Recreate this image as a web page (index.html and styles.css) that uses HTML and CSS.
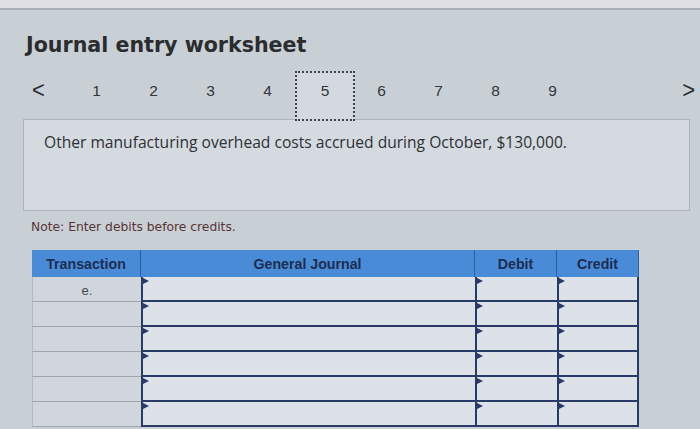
FILE: index.html
```html
<!DOCTYPE html>
<html>
<head>
<meta charset="utf-8">
<link rel="stylesheet" href="styles.css">
</head>
<body>
<div class="topband"></div>
<div class="page">
  <h1 class="title">Journal entry worksheet</h1>
  <div class="pager">
    <span class="arrow prev">&lt;</span>
    <div class="pages">
      <span class="pg">1</span>
      <span class="pg">2</span>
      <span class="pg">3</span>
      <span class="pg">4</span>
      <span class="pg active">5</span>
      <span class="pg">6</span>
      <span class="pg">7</span>
      <span class="pg">8</span>
      <span class="pg">9</span>
    </div>
    <span class="arrow next">&gt;</span>
  </div>
  <div class="desc">Other manufacturing overhead costs accrued during October, $130,000.</div>
  <div class="note">Note: Enter debits before credits.</div>
  <div class="journal">
    <div class="hd">Transaction</div>
    <div class="hd">General Journal</div>
    <div class="hd">Debit</div>
    <div class="hd">Credit</div>

    <div class="tx">e.</div><div class="in"></div><div class="in"></div><div class="in"></div>
    <div class="tx"></div><div class="in"></div><div class="in"></div><div class="in"></div>
    <div class="tx"></div><div class="in"></div><div class="in"></div><div class="in"></div>
    <div class="tx"></div><div class="in"></div><div class="in"></div><div class="in"></div>
    <div class="tx"></div><div class="in"></div><div class="in"></div><div class="in"></div>
    <div class="tx"></div><div class="in"></div><div class="in"></div><div class="in"></div>
  </div>
</div>
</body>
</html>
```
FILE: styles.css
```css
html, body {
  margin: 0;
  padding: 0;
}
body {
  width: 700px;
  height: 429px;
  overflow: hidden;
  background: #c8cfd5;
  font-family: "DejaVu Sans", Verdana, sans-serif;
  color: #2d2f33;
}
.topband {
  height: 8px;
  background: #dde1e4;
  border-bottom: 2px solid #a9b0b6;
}
.page {
  padding: 0 0 0 23px;
}
.title {
  margin: 23px 0 0 3px;
  font-size: 20.6px;
  line-height: 24px;
  font-weight: bold;
  color: #2b2c2e;
}
.pager {
  display: flex;
  align-items: center;
  margin-top: 14px;
  height: 50px;
}
.arrow {
  font-family: "Liberation Sans", Arial, sans-serif;
  font-size: 22px;
  color: #2b2d33;
  transform: scaleY(1.1);
  padding-bottom: 11px;
}
.prev {
  margin-left: 9px;
  width: 36px;
}
.pages {
  display: flex;
}
.pg {
  width: 57px;
  height: 50px;
  box-sizing: border-box;
  display: flex;
  align-items: center;
  justify-content: center;
  padding-bottom: 10px;
  font-family: "Liberation Sans", Arial, sans-serif;
  font-size: 15.5px;
  color: #33363b;
}
.pg.active {
  border: 2px dotted #3a4150;
  background: #d3d9de;
  width: 60px;
  margin-left: -1px;
  margin-right: -2px;
  padding-bottom: 11px;
}
.next {
  margin-left: auto;
  margin-right: 5px;
}
.desc {
  width: 667px;
  height: 92px;
  box-sizing: border-box;
  border: 1px solid #aeb4ba;
  background: #d4dadf;
  padding: 11px 0 0 20px;
  font-family: "Open Sans", sans-serif;
  font-size: 15.6px;
  color: #2e3136;
  margin-top: -2px;
}
.note {
  margin: 9px 0 0 8px;
  font-family: "DejaVu Sans", Verdana, sans-serif;
  font-size: 12.3px;
  color: #5a3434;
}
.journal {
  display: grid;
  grid-template-columns: 109px 334px 82px 82px;
  grid-template-rows: 27px repeat(6, 25px);
  margin: 16px 0 0 9px;
  width: 607px;
}
.hd {
  background: #4a8bd8;
  color: #1c2d52;
  font-family: "Liberation Sans", Arial, sans-serif;
  font-weight: bold;
  font-size: 14.2px;
  display: flex;
  align-items: center;
  justify-content: center;
  border-right: 1px solid #2f5ea0;
}
.tx {
  background: #d0d6db;
  border-bottom: 1px solid #9ea5ac;
  border-left: 1px solid #b5bbc1;
  font-family: "Liberation Sans", Arial, sans-serif;
  font-size: 13px;
  color: #444a52;
  text-align: center;
  padding-top: 6px;
  box-sizing: border-box;
}
.in {
  position: relative;
  background: #dce2e7;
  border-left: 2px solid #2a3a68;
  border-bottom: 2px solid #2a3a68;
  box-sizing: border-box;
}
.in:nth-child(4n) {
  border-right: 2px solid #2a3a68;
}
.in::before {
  content: "";
  position: absolute;
  left: 0;
  top: 1px;
  border-left: 6px solid #2a3a68;
  border-top: 3px solid transparent;
  border-bottom: 3px solid transparent;
}
```
